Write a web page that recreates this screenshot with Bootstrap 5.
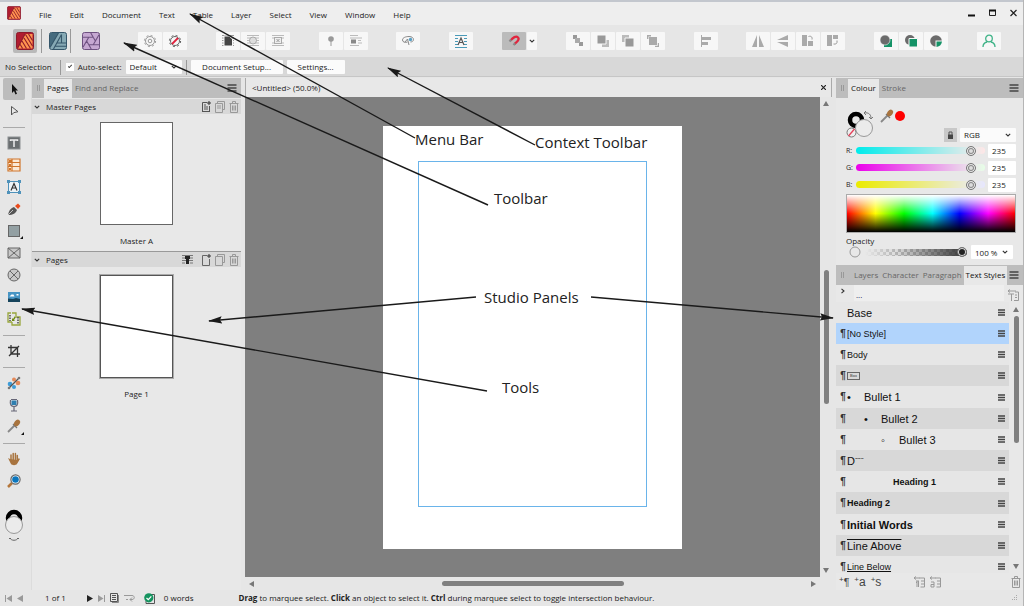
<!DOCTYPE html>
<html lang="en">
<head>
<meta charset="utf-8">
<meta name="viewport" content="width=device-width, initial-scale=1">
<title>Untitled (50.0%)</title>
<link href="https://cdn.jsdelivr.net/npm/bootstrap@5.3.0/dist/css/bootstrap.min.css" rel="stylesheet">
<style>
:root{--ui:#e8e8e8;--head:#bdbdbd;--ctx:#d8d8d8;--ink:#222}
body{font:8px/12px "Open Sans","Noto Sans",sans-serif;background:#e6e6e6;color:var(--ink);height:100vh;min-height:600px;border-right:1px solid #b5b5b5}
button,input,select{font:inherit;color:inherit;border:0;padding:0}
button{background:none;display:flex;align-items:center;justify-content:center;white-space:nowrap}
a{color:inherit;text-decoration:none}
svg{display:block;flex:none;fill:none;stroke:none}
.menus{height:25px;background:#eee;border-top:2px solid #c3c7ce;padding:0 6px 0 7px}
.menu-links{gap:18px;margin-left:18px;flex:1;padding-top:3px}
.win{gap:14px}
.tools-top{height:32px;padding:0 22px 0 13px}
.persona{width:24px;height:24px}
.persona.on{background:#b9b9b9;border-radius:2px}
.vsep{width:1px;height:15px;background:#999;flex:none}
.vsep.tall{height:24px}
.groups{margin-left:35px;flex:1}
.tb{width:24px;height:18px;background:#f7f7f7;border-radius:1px}
.tb.drop{width:10px}
.tb.on{background:#bbb}
.ctx{height:21px;background:var(--ctx);padding:2px 0 0 5px;border-bottom:1px solid #c6c6c6}
.white-box{background:#fbfbfb;height:14px;border-radius:1px}
.ctx input[type=checkbox]{appearance:none;width:8px;height:8px;background:#fff;margin:0 4px 0 5px;position:relative}
.ctx input:checked::after{content:"";position:absolute;left:2px;top:2px;width:4px;height:2px;border:solid #444;border-width:0 0 1px 1px;transform:rotate(-45deg)}
select{appearance:none;border-radius:1px}
.pick{position:relative}
.pick svg{position:absolute;right:5px;top:5px;pointer-events:none}
.pick select{width:56px;padding-left:4px;display:block}
.work{padding-top:1px;gap:4px;min-height:0}
.toolcol{width:32px;padding-right:3px;border-right:1px solid #dcdcdc;align-items:center}
.tl{width:22px;height:22px;flex:none}
.tl.on{background:#bcbcbc;border-radius:2px}
.rule{width:22px;height:1px;background:#aaa;margin:5px 0 4px;flex:none}
.pagescol{width:209px;margin-left:-4px;background:var(--ui)}
.tabrow{height:20px;background:var(--head);color:#666;flex:none}
.tabrow .grip{width:1px;height:6px;border:solid #999;border-width:0 1px;box-sizing:content-box;margin:0 4px 0 5px}
.tabrow button{height:19px;align-self:flex-end;padding:0 3px 2px}
.tabrow.tight button{padding:0 2px 2px}
.tabrow button.on{background:var(--ui);color:#111}
.sect{height:15px;background:var(--ctx);padding:0 2px;margin-top:1px}
.sect.second{border-top:1px solid #999;height:16px;margin-top:0}
.sect span{margin-left:6px;flex:1}
.sheetbox{padding:8px 0 4px}
.sheet{width:73px;height:103px;background:#fff;border:1px solid #666}
.sheet.sel{border-color:#555;box-shadow:0 0 0 1px #aaa}
.cap{margin-top:10px}
.doc{flex:1;min-width:0}
.doctab{height:19px;border:1px solid #aaa;border-width:0 1px;padding:0 5px 0 6px;flex:none;background:var(--ui)}
.canvas{background:#7f7f7f;flex:1;min-width:0}
.paper{width:299px;height:423px;background:#fff;padding:35px 35px 42px}
.margins{border:1px solid #6ab4ea}
.vbar{width:12px;padding:4px 0;flex:none}
.thumb{width:5px;height:134px;border-radius:3px;background:#808080}
.thumb.short{height:127px;margin-top:4px}
.thumb.flat{height:5px;width:182px}
.down{transform:rotate(180deg)}
.hbar{height:13px;padding:0 16px 0 4px;flex:none}
.studio{width:187px;background:var(--ui)}
.colourbox{padding:10px 7px 5px 10px;height:167px;flex:none}
.row-s{height:17px;gap:3px}
.row-s label{width:7px;font-size:7px}
.row-s input[type=number],.opac{width:28px;height:14px;background:#fff;padding-left:4px;border-radius:1px;appearance:textfield}
.opac{width:42px;display:block}
input::-webkit-inner-spin-button{display:none}
input[type=range]{appearance:none;height:7px;border-radius:4px;flex:1;min-width:0}
input[type=range]::-webkit-slider-thumb{appearance:none;width:10px;height:10px;border-radius:50%;border:1px solid #777;background:#ddd;box-shadow:inset 0 0 0 1px #eee,inset 0 0 0 2px #888}
.rg-r{background:linear-gradient(90deg,#00ebeb,#ebebeb 92%,#ffe6e6)}
.rg-g{background:linear-gradient(90deg,#eb00eb,#ebebeb 92%,#e6ffe6)}
.rg-b{background:linear-gradient(90deg,#ebeb00,#ebebeb 92%,#e6e6ff)}
.rg-o{background:linear-gradient(90deg,#e8e8e8,#aaaaaa66 30%,#333),repeating-conic-gradient(#bbb 0 25%,#fff 0 50%) 0 0/6px 6px}
input.rg-o::-webkit-slider-thumb{background:#222;box-shadow:inset 0 0 0 1px #ddd}
.spectrum{height:39px;border:1px solid #aaa;margin-top:1px;background:linear-gradient(#fff,#fff0 50%,#0000 50%,#000),linear-gradient(90deg,red,#ff0 17%,#0f0 34%,#0ff 51%,#00f 67%,#f0f 84%,red)}
.find{height:17px;flex:none}
.find input{background:#eee;height:16px;flex:1;min-width:0;margin-left:8px;padding:3px 0 0 2px;color:#225}
.styles{flex:1;min-height:0;overflow:hidden}
.st{height:21px;padding:0 4px 0 3px;font:9px/12px "Liberation Sans",Arial,sans-serif;color:#111;background:#e6e6e6}
.st:nth-child(5n){height:22px}
.st:nth-child(2n){background:#d8d8d8}
.st.on{background:#b1d4fc}
.pil{width:8px;font-weight:bold;color:#333;text-align:center;font-size:10px}
.nm{flex:1}
.big{font-size:11px}
.in1{padding-left:17px}.in2{padding-left:34px}.in3{padding-left:52px}
.in1,.in2,.in3{position:relative}
.in1::before,.in2::before,.in3::before{content:"•";position:absolute;left:0}
.in2::before{left:17px}
.in3::before{content:"◦";left:34px}
.boxed{border:1px solid #666;font-size:4px;line-height:6px;padding:0 2px;color:#333}
.over{text-decoration:overline}
.dash{font-size:5px;line-height:1;position:relative;top:-5px}
.sbar{width:14px;padding:5px 0 4px}
.foot{height:17px;padding:0 2px 0 3px;font:12px/14px "Liberation Sans",sans-serif;color:#444;flex:none;gap:5px}
.foot sup{font-size:8px;top:-4px}
.status{height:16px;padding:0 5px;flex:none;gap:5px}
.status .pageno{margin:0 16px 0 17px}
.hint{margin-left:40px}
.notes{position:absolute;inset:0;pointer-events:none;overflow:hidden}
.notes span{position:absolute;font-size:15px;line-height:20px;color:#222;white-space:nowrap}
</style>
</head>
<body class="d-flex flex-column overflow-hidden position-relative">
<svg width="0" height="0" class="position-absolute" aria-hidden="true"><defs>
<symbol id="burger" viewBox="0 0 10 8"><path d="M0.500 1h9M0.500 4h9M0.500 7h9" stroke="#444" stroke-width="1.400"/></symbol>
<symbol id="lines" viewBox="0 0 7 7"><path d="M0 1h7M0 3.500h7M0 6h7" stroke="#444" stroke-width="1.300"/></symbol>
<symbol id="chev" viewBox="0 0 6 4"><path d="M.8.8 3 3 5.200.8" stroke="#333" stroke-width="1.100"/></symbol>
<symbol id="tri" viewBox="0 0 6 5"><path d="M3 0l3 5H0z" fill="#777"/></symbol>
<symbol id="trash" viewBox="0 0 10 12"><path d="M.5 2.500h9M3.500 2V.5h3V2M1.500 3v8.500h7V3M3.500 4.500v5M5 4.500v5M6.500 4.500v5" stroke="#999"/></symbol>
<symbol id="picker" viewBox="0 0 14 14"><path d="M1 13 8 6" stroke="#888" stroke-width="1.800"/><path d="M6 5l4 4" stroke="#777" stroke-width="1.200"/><ellipse cx="10" cy="4" rx="2.600" ry="3.600" transform="rotate(40 10 4)" fill="#a8743f"/></symbol>
<symbol id="pub" viewBox="0 0 18 18"><rect x=".5" y=".5" width="17" height="17" rx="2" fill="#b01c30" stroke="#8c1a2a"/><path d="M1.500 16.500 9 2h7.500v14.500z" fill="#ff934f"/><path d="M9 2 1.500 16.500M12.500 2l4 6.500M9.500 2.500l7 11.500M8 6l6.500 10.500M6 9l4.500 7.500M4.200 12.500l2.400 4" stroke="#8c1a2a" stroke-width="1.100"/></symbol>
</defs></svg>

<header class="menus d-flex align-items-center">
  <svg width="14" height="14"><use href="#pub"/></svg>
  <nav class="menu-links d-flex"><a href="#">File</a><a href="#">Edit</a><a href="#">Document</a><a href="#">Text</a><a href="#">Table</a><a href="#">Layer</a><a href="#">Select</a><a href="#">View</a><a href="#">Window</a><a href="#">Help</a></nav>
  <div class="win d-flex">
    <button aria-label="Minimise"><svg width="7" height="8"><path d="M0 6.500h7" stroke="#111" stroke-width="2"/></svg></button>
    <button aria-label="Maximise"><svg width="7" height="8"><path d="M.5 1v5.500h6V1" stroke="#222"/><path d="M0 1.500h7" stroke="#111" stroke-width="2"/></svg></button>
    <button aria-label="Close"><svg width="7" height="8"><path d="M.5 1l6 6M6.500 1l-6 6" stroke="#222" stroke-width="1.200"/></svg></button>
  </div>
</header>

<div class="tools-top d-flex align-items-center">
  <button class="persona on" aria-label="Publisher"><svg width="18" height="18"><use href="#pub"/></svg></button>
  <i class="vsep tall mx-1"></i>
  <button class="persona" aria-label="Designer"><svg width="18" height="18"><rect x=".5" y=".5" width="17" height="17" rx="2" fill="#86a9b4" stroke="#35566a"/><path d="M1 1h8.500L1 15.500z" fill="#456b7e"/><path d="M9.500 1 1 15.500M12.500 2.500 4.500 17M12.500 2.500V11M7.800 11H17M6 14.200h11" stroke="#35566a" stroke-width="1.100"/></svg></button>
  <i class="vsep tall"></i>
  <button class="persona ms-2" aria-label="Photo"><svg width="18" height="18"><rect x=".5" y=".5" width="17" height="17" rx="2" fill="#c6a8d2" stroke="#6e5180"/><path d="M6.800 5.200h4.400L13.400 9l-2.200 3.800H6.800L4.600 9zM11.200 5.200 8.800 1M13.400 9 17 2.800M11.200 12.800H17M6.800 12.800 9.200 17M4.600 9 1 15.200M6.800 5.200H1" stroke="#6e5180" stroke-width="1.100"/></svg></button>
  <div class="groups d-flex justify-content-between">
    <div class="d-flex" style="gap:1px">
      <button class="tb" aria-label="Preferences"><svg width="14" height="14"><circle cx="7" cy="7" r="4.500" stroke="#999"/><circle cx="7" cy="7" r="5.600" stroke="#999" stroke-dasharray="2 2.400"/><circle cx="7" cy="7" r="1.800" stroke="#999"/></svg></button>
      <button class="tb" aria-label="Preflight"><svg width="14" height="14"><circle cx="7" cy="7" r="4.500" stroke="#666"/><circle cx="7" cy="7" r="5.600" stroke="#555" stroke-dasharray="2 2.400"/><path d="M4 10l6-6" stroke="#e0203c" stroke-width="1.800"/></svg></button>
    </div>
    <div class="d-flex" style="gap:1px">
      <button class="tb" aria-label="Wrap settings"><svg width="14" height="12"><path d="M1 .5h12M1 3h12M1 5.500h12M1 8h12M1 10.500h12" stroke="#999"/><path d="M3 1h5l3.500 3v7H3z" fill="#444" stroke="#f7f7f7"/></svg></button>
      <button class="tb" aria-label="Wrap none"><svg width="14" height="12"><path d="M1 .5h12M1 3h12M1 5.500h12M1 8h12M1 10.500h12" stroke="#bbb"/><circle cx="7" cy="5.500" r="3.500" fill="#ddd" stroke="#aaa"/></svg></button>
      <button class="tb" aria-label="Wrap edges"><svg width="14" height="12"><path d="M1 .5h12M1 3h12M1 8h12M1 10.500h12" stroke="#bbb"/><rect x="3.500" y="2.500" width="7" height="6" fill="#eee" stroke="#aaa"/><path d="M5.500 4l3 3M8.500 4l-3 3" stroke="#999"/></svg></button>
    </div>
    <div class="d-flex" style="gap:1px">
      <button class="tb" aria-label="Pin"><svg width="14" height="12"><circle cx="7" cy="4" r="2.800" fill="#999"/><path d="M7 5v6" stroke="#999"/></svg></button>
      <button class="tb" aria-label="Inline"><svg width="14" height="12"><path d="M1 .5h8M1 3h12M9 5.500h3M9 8h4M1 10.500h9" stroke="#bbb"/><path d="M2 4.500h5v4H2z" fill="#888"/></svg></button>
    </div>
    <button class="tb" aria-label="Preview"><svg width="14" height="12"><path d="M6.500 7C4 8 1.500 7 1.500 5 1.500 2.500 5 1.500 8 1.500s4.500 1.500 4.500 3-1.500 2.500-3 2.500M4 7l2.500-3L8 10" stroke="#888"/><circle cx="9.500" cy="4.500" r="1.700" fill="#5a9fc4"/></svg></button>
    <button class="tb" aria-label="Baseline grid"><svg width="14" height="14"><path d="M1 1.500h12M1 4.500h3M10 4.500h3M1 7.500h3M10 7.500h3M1 10.500h3M10 10.500h3M1 13.500h12" stroke="#4a9ab8"/><path d="M4 11 7 4l3 7M5 8.500h4" stroke="#555" stroke-width="1.200"/></svg></button>
    <div class="d-flex" style="gap:1px">
      <button class="tb on" aria-label="Snapping"><svg width="14" height="12"><path d="M3.500 5.500C6 2.500 9 .5 11 2.500S9.500 7.500 7.500 9" stroke="#e1253e" stroke-width="2.300"/><path d="M4.200 4.800 2.500 6.500M8.300 8.300l-1.800 1.700" stroke="#888" stroke-width="2.300"/></svg></button>
      <button class="tb drop" aria-label="Snapping options"><svg width="6" height="4"><use href="#chev"/></svg></button>
    </div>
    <div class="d-flex" style="gap:1px">
      <button class="tb" aria-label="Move to back"><svg width="12" height="12"><path d="M1 0h4v4H1zM7 7h4v4H7z" fill="#999"/><path d="M3 3h5v5H3z" fill="#aaa"/></svg></button>
      <button class="tb" aria-label="Move back"><svg width="12" height="12"><path d="M5 5h7v7H5z" fill="#bbb"/><path d="M0 0h9v9H0z" fill="#999" stroke="#f7f7f7"/></svg></button>
      <button class="tb" aria-label="Move forward"><svg width="12" height="12"><path d="M0 0h7v7H0z" fill="#bbb"/><path d="M3 3h9v9H3z" fill="#999" stroke="#f7f7f7"/></svg></button>
      <button class="tb" aria-label="Move to front"><svg width="12" height="12"><path d="M2 2h8v8H2z" fill="#aaa"/><path d="M.7 4V.7H4M11.500 8v3.500H8" stroke="#aaa" stroke-width="1.400"/></svg></button>
    </div>
    <button class="tb" aria-label="Alignment"><svg width="12" height="12"><path d="M1.500 0v12" stroke="#aaa"/><path d="M2 3.500h9M2 8.500h6" stroke="#aaa" stroke-width="3"/></svg></button>
    <div class="d-flex" style="gap:1px">
      <button class="tb" aria-label="Flip horizontal"><svg width="12" height="12"><path d="M5 0v12H0zM7 0v12h5z" fill="#aaa"/></svg></button>
      <button class="tb" aria-label="Flip vertical"><svg width="12" height="12"><path d="M11 0v5H0zM11 7v5L0 7z" fill="#aaa"/></svg></button>
      <button class="tb" aria-label="Rotate left"><svg width="12" height="12"><path d="M0 0h5v11H0zM6 6h5v5H6z" fill="#aaa"/><path d="M6.500 1.500c3-1 4 1 3.500 3" stroke="#999"/></svg></button>
      <button class="tb" aria-label="Rotate right"><svg width="12" height="12"><path d="M0 0h5v11H0zM6 0h5v4H6z" fill="#aaa"/><path d="M10 5.500c.5 3-1 4-3.500 3.500" stroke="#999"/></svg></button>
    </div>
    <div class="d-flex" style="gap:1px">
      <button class="tb" aria-label="Insert behind"><svg width="12" height="12"><path d="M4 4h8v8H4z" fill="#159367"/><circle cx="5" cy="5" r="5" fill="#6b6b6b" stroke="#f7f7f7" stroke-width=".6"/></svg></button>
      <button class="tb" aria-label="Insert on top"><svg width="13" height="12"><circle cx="5" cy="5" r="5" fill="#6b6b6b"/><path d="M4 3.500h8.500V12H4z" fill="#159367" stroke="#f7f7f7"/></svg></button>
      <button class="tb" aria-label="Insert inside"><svg width="12" height="12"><circle cx="6" cy="6" r="5.800" fill="#6b6b6b"/><path d="M5.500 5.500h7v7h-7z" fill="#f7f7f7"/><path d="M6.500 6.500H12c-.5 3-2 5-5.500 5.500z" fill="#159367"/></svg></button>
    </div>
    <button class="tb" aria-label="Account"><svg width="14" height="14"><circle cx="7" cy="4.500" r="3.300" stroke="#3fb387" stroke-width="1.300"/><path d="M1 13c0-3 2-4.500 4-5M13 13c0-3-2-4.500-4-5" stroke="#3fb387" stroke-width="1.300"/></svg></button>
  </div>
</div>

<div class="ctx d-flex align-items-center">
  <span>No Selection</span><i class="vsep ms-2"></i>
  <input type="checkbox" id="auto" checked><label for="auto">Auto-select:</label>
  <div class="pick ms-1"><select class="white-box" aria-label="Auto-select mode"><option>Default</option></select><svg width="6" height="4"><use href="#chev"/></svg></div>
  <i class="vsep ms-1"></i>
  <button class="white-box ms-1 px-2" style="min-width:92px">Document Setup...</button>
  <button class="white-box ms-1 px-2" style="min-width:58px">Settings...</button>
</div>

<main class="work d-flex flex-fill">
  <aside class="toolcol d-flex flex-column flex-shrink-0">
    <button class="tl on" aria-label="Move"><svg width="14" height="14"><path d="M5 2v9l2-2 1.500 3.500 1.500-.8L8.500 8.500H11z" fill="#111"/></svg></button>
    <button class="tl" aria-label="Node"><svg width="14" height="14"><path d="M4.500 2.500v8.500l2.200-2.300 4.300-1z" stroke="#555"/></svg></button>
    <i class="rule"></i>
    <button class="tl" aria-label="Frame text"><svg width="14" height="14"><rect x="1" y="1" width="12" height="12" fill="#6a6e70" stroke="#8c9092"/><path d="M3.500 5V4h7v1M7 4v7" stroke="#eee" stroke-width="1.500"/></svg></button>
    <button class="tl" aria-label="Table"><svg width="14" height="14"><rect x="1" y="1" width="12" height="12" fill="#fbe9d5"/><path d="M1 1h12v12H1zM1 4.500h12M1 8.500h12M5 1v12" stroke="#d0752b" stroke-width="1.200"/><path d="M2 2h3v2H2zM2 6h2v2H2zM2 10h2v2H2z" fill="#d0752b"/></svg></button>
    <button class="tl" aria-label="Artistic text"><svg width="14" height="14"><rect x="1.500" y="1.500" width="11" height="11" fill="#edf3f7" stroke="#4f92ba"/><path d="M0 0h3v3H0zM11 0h3v3h-3zM0 11h3v3H0zM11 11h3v3h-3z" fill="#4f92ba"/><path d="M4 10.500 7 3.500l3 7M5 8h4" stroke="#333" stroke-width="1.200"/></svg></button>
    <button class="tl" aria-label="Pen"><svg width="14" height="14"><path d="M1 13c1-5 3-7 6-8l3 3c-1 3-4 5-9 5z" fill="#555"/><path d="M1 13l5-5" stroke="#ddd" stroke-width=".8"/><path d="M8 4l3 3 2.500-3L11 1.500z" fill="#ea4b1c"/></svg></button>
    <button class="tl" aria-label="Rectangle"><svg width="22" height="22"><rect x="5.500" y="5.500" width="11" height="11" fill="#93a0a3" stroke="#666"/><path d="M20 16v3h-3z" fill="#111"/></svg></button>
    <button class="tl" aria-label="Picture frame"><svg width="14" height="14"><path d="M1 2h12v10H1zM1 2l12 10M13 2 1 12" fill="#c8c8c8" stroke="#666"/></svg></button>
    <button class="tl" aria-label="Ellipse frame"><svg width="14" height="14"><circle cx="7" cy="7" r="6" fill="#c8c8c8" stroke="#666"/><path d="M3 3l8 8M11 3l-8 8" stroke="#666"/></svg></button>
    <button class="tl" aria-label="Place image"><svg width="14" height="14"><rect x="1" y="2" width="12" height="10" fill="#4895c4"/><path d="M1 8.500l5 .5 3-1 4 1v3H1z" fill="#17445c"/><path d="M2.500 6.500h5l-1-2h-2zM9.500 5.500h2V4h-2z" fill="#fff"/></svg></button>
    <button class="tl" aria-label="Data merge"><svg width="14" height="14"><path d="M4 1H1v9h4M5 1h4v3M9 13h4V5H9M5 10v3h4" stroke="#98a63c" stroke-width="1.300"/><path d="M3 3v6M11 5v7" stroke="#555" stroke-width="1.600" stroke-dasharray="1.500 1"/><path d="M5 9V6l1 1 2-3 1 1-2 3 1 1z" fill="#6f8a10"/></svg></button>
    <i class="rule"></i>
    <button class="tl" aria-label="Crop"><svg width="14" height="14"><path d="M4 1v9h9M1 3.500h9.500V13M2 12 12 2" stroke="#333" stroke-width="1.300"/></svg></button>
    <i class="rule"></i>
    <button class="tl" aria-label="Fill"><svg width="14" height="14"><circle cx="7" cy="3.500" r="2" fill="#e48a5a"/><circle cx="11" cy="7" r="2.300" fill="#e48a5a"/><circle cx="3" cy="8" r="2.300" fill="#3d9cd8"/><circle cx="7" cy="11" r="2" fill="#3d9cd8"/><path d="M2 12 12 2" stroke="#555" stroke-width="1.300"/><circle cx="2" cy="12" r="1.300" fill="#777"/><circle cx="12" cy="2" r="1.300" fill="#777"/></svg></button>
    <button class="tl" aria-label="Transparency"><svg width="14" height="14"><path d="M4 1.500h6M3.500 2c-1 5 1 6.500 3.500 6.500s4.500-1.500 3.500-6.500M7 8.500v4M4 13h6" stroke="#667" stroke-width="1.200"/><path d="M4.500 2.500h5v4.500h-5z" fill="#2f7fb0"/></svg></button>
    <button class="tl" aria-label="Colour picker"><svg width="22" height="22"><use href="#picker" x="4" y="3" width="14" height="14"/><path d="M21 16v3h-3z" fill="#111"/></svg></button>
    <i class="rule"></i>
    <button class="tl" aria-label="Hand"><svg width="14" height="14"><path d="M3 7l-2-1 3 6c1 1.500 5 1.500 6 0l2.500-5L10 8z" fill="#a8743f"/><path d="M4 9V3M6.200 8V1.500M8.400 8V1.500M10.300 9V3.500M12 7l-2 3" stroke="#a8743f" stroke-width="1.500" stroke-linecap="round"/></svg></button>
    <button class="tl" aria-label="Zoom"><svg width="14" height="14"><path d="M1 13l4-4" stroke="#b5763a" stroke-width="2.500"/><circle cx="8.500" cy="5.500" r="4.600" fill="#fff" stroke="#666" stroke-width="1.200"/><circle cx="8.500" cy="5.500" r="3.300" fill="#0b76bd"/></svg></button>
    <svg class="mt-3" width="20" height="36"><circle cx="10" cy="10" r="6" stroke="#000" stroke-width="4.500"/><circle cx="10" cy="17" r="8.500" fill="#ebebeb" stroke="#999"/><path d="M6 30c1 3 7 3 8 0M5 30.500h2M13 30.500h2" stroke="#666"/></svg>
  </aside>

  <section class="pagescol flex-shrink-0">
    <div class="tabrow d-flex align-items-center pe-1"><i class="grip"></i><button class="on">Pages</button><button>Find and Replace</button><button class="ms-auto px-0" aria-label="Panel menu"><svg width="10" height="8"><use href="#burger"/></svg></button></div>
    <div class="sect d-flex align-items-center"><svg width="6" height="4"><use href="#chev"/></svg><span>Master Pages</span>
      <div class="d-flex gap-1">
      <svg width="10" height="12"><path d="M6 1.500H1.500v9h7V5M3 4h2M3 6h4M3 8h4M1 10.500h8" stroke="#555"/><path d="M8 0v4M6 2h4" stroke="#333"/></svg>
      <svg width="10" height="12"><path d="M2.500 2V.5h7v8H8M.5 2.500h7v9h-7zM2 5h4M2 7h4" stroke="#999"/></svg>
      <svg width="10" height="12"><use href="#trash"/></svg></div></div>
    <div class="sheetbox d-flex flex-column align-items-center"><div class="sheet"></div><div class="cap">Master A</div></div>
    <div class="sect second d-flex align-items-center"><svg width="6" height="4"><use href="#chev"/></svg><span>Pages</span>
      <div class="d-flex gap-1">
      <svg class="me-1" width="11" height="12"><path d="M0 1.500h11M0 4h11M0 6.500h11M0 9h3M8 9h3" stroke="#777"/><path d="M3 2h5v3H7v5H4V5H3z" fill="#222"/></svg>
      <svg width="10" height="12"><path d="M6 1.500H1.500v10h7V5" stroke="#666"/><path d="M8 0v4M6 2h4" stroke="#333"/></svg>
      <svg width="10" height="12"><path d="M2.500 2V.5h7v8H8M.5 2.500h7v9h-7z" stroke="#999"/></svg>
      <svg width="10" height="12"><use href="#trash"/></svg></div></div>
    <div class="sheetbox d-flex flex-column align-items-center"><div class="sheet sel"></div><div class="cap">Page 1</div></div>
  </section>

  <section class="doc d-flex flex-column">
    <div class="doctab d-flex align-items-center justify-content-between"><span>&lt;Untitled&gt; (50.0%)</span><button aria-label="Close document"><svg width="5" height="5"><path d="M0 0l5 5M5 0 0 5" stroke="#222" stroke-width="1.200"/></svg></button></div>
    <div class="d-flex flex-fill">
      <div class="canvas d-flex align-items-center justify-content-center"><div class="paper d-flex"><div class="margins flex-fill"></div></div></div>
      <div class="vbar d-flex flex-column align-items-center justify-content-between"><svg width="6" height="5"><use href="#tri"/></svg><i class="thumb"></i><svg class="down" width="6" height="5"><use href="#tri"/></svg></div>
    </div>
    <div class="hbar d-flex align-items-center justify-content-between"><svg width="5" height="6"><path d="M5 0v6L0 3z" fill="#777"/></svg><i class="thumb flat"></i><svg width="5" height="6"><path d="M0 0v6l5-3z" fill="#777"/></svg></div>
  </section>

  <aside class="studio d-flex flex-column flex-shrink-0">
    <div class="tabrow d-flex align-items-center pe-1"><i class="grip"></i><button class="on">Colour</button><button>Stroke</button><button class="ms-auto px-0" aria-label="Panel menu"><svg width="10" height="8"><use href="#burger"/></svg></button></div>
    <div class="colourbox">
      <div class="d-flex justify-content-between" style="height:34px">
        <svg width="60" height="32"><circle cx="10" cy="12" r="6" stroke="#000" stroke-width="4.500"/><circle cx="18" cy="20" r="8.500" fill="#ebebeb" stroke="#999"/><circle cx="5.500" cy="24.500" r="4.500" fill="#eee" stroke="#777"/><path d="M2.500 28l6-7" stroke="#e5405a" stroke-width="1.300"/><path d="M18 5c5-1 7 2 7 5M20 3l-2 2 2 2M23 9l2 2 2-2" stroke="#777"/><use href="#picker" x="34" y="1" width="14" height="14"/><circle cx="54" cy="8" r="5" fill="#f00"/></svg>
        <div class="d-flex align-items-end" style="gap:3px"><button aria-label="Lock" style="width:13px;height:14px;background:#c8c8c8"><svg width="7" height="8"><path d="M1 3.500h5V8H1z" fill="#444"/><path d="M2 4V1h3v3" stroke="#555"/></svg></button>
        <div class="pick"><select class="white-box" aria-label="Colour model"><option>RGB</option></select><svg width="6" height="4"><use href="#chev"/></svg></div></div>
      </div>
      <div class="row-s d-flex align-items-center"><label for="r">R:</label><input id="r" class="rg-r" type="range" max="255" value="235"><input type="number" value="235" aria-label="Red"></div>
      <div class="row-s d-flex align-items-center"><label for="g">G:</label><input id="g" class="rg-g" type="range" max="255" value="235"><input type="number" value="235" aria-label="Green"></div>
      <div class="row-s d-flex align-items-center"><label for="b">B:</label><input id="b" class="rg-b" type="range" max="255" value="235"><input type="number" value="235" aria-label="Blue"></div>
      <div class="spectrum"></div>
      <label for="op" class="d-block mt-1" style="line-height:8px">Opacity</label>
      <div class="d-flex align-items-center" style="gap:4px;padding:0 3px"><svg width="12" height="12"><circle cx="6" cy="6" r="5" stroke="#999"/></svg><input id="op" class="rg-o" type="range" value="100"><div class="pick"><input class="opac" value="100 %" aria-label="Opacity value"><svg width="6" height="4"><use href="#chev"/></svg></div></div>
    </div>
    <div class="tabrow tight d-flex align-items-center pe-1"><i class="grip"></i><button class="ms-1">Layers</button><button>Character</button><button>Paragraph</button><button class="on">Text Styles</button><button class="ms-auto px-0" aria-label="Panel menu"><svg width="10" height="8"><use href="#burger"/></svg></button></div>
    <div class="find d-flex ps-1"><svg width="6" height="8" style="margin-top:3px"><path d="M1.500.8 4 3 1.500 5.200" stroke="#333" stroke-width="1.100"/></svg><input aria-label="Current style" value="..."><svg class="mx-1 mt-1" width="11" height="12"><path d="M0 2h8M2 .5 0 2l2 1.500M0 5h6M3.500 5v7M7 3h3.500v8.500H6M7 6h2M7 8.500h2" stroke="#999"/></svg></div>
    <div class="d-flex flex-fill" style="min-height:0">
      <div class="styles">
        <div class="st d-flex align-items-center"><span class="pil"></span><span class="nm big">Base</span><svg width="7" height="7"><use href="#lines"/></svg></div>
        <div class="st on d-flex align-items-center"><span class="pil">¶</span><span class="nm">[No Style]</span><svg width="7" height="7"><use href="#lines"/></svg></div>
        <div class="st d-flex align-items-center"><span class="pil">¶</span><span class="nm">Body</span><svg width="7" height="7"><use href="#lines"/></svg></div>
        <div class="st d-flex align-items-center"><span class="pil">¶</span><span class="nm d-flex"><span class="boxed">Box</span></span><svg width="7" height="7"><use href="#lines"/></svg></div>
        <div class="st d-flex align-items-center"><span class="pil">¶</span><span class="nm big in1">Bullet 1</span><svg width="7" height="7"><use href="#lines"/></svg></div>
        <div class="st d-flex align-items-center"><span class="pil">¶</span><span class="nm big in2">Bullet 2</span><svg width="7" height="7"><use href="#lines"/></svg></div>
        <div class="st d-flex align-items-center"><span class="pil">¶</span><span class="nm big in3">Bullet 3</span><svg width="7" height="7"><use href="#lines"/></svg></div>
        <div class="st d-flex align-items-center"><span class="pil">¶</span><span class="nm big">D<span class="dash">~~~</span></span><svg width="7" height="7"><use href="#lines"/></svg></div>
        <div class="st d-flex align-items-center"><span class="pil">¶</span><span class="nm fw-bold text-center pe-3">Heading 1</span><svg width="7" height="7"><use href="#lines"/></svg></div>
        <div class="st d-flex align-items-center"><span class="pil">¶</span><span class="nm fw-bold">Heading 2</span><svg width="7" height="7"><use href="#lines"/></svg></div>
        <div class="st d-flex align-items-center"><span class="pil">¶</span><span class="nm big fw-bold">Initial Words</span><svg width="7" height="7"><use href="#lines"/></svg></div>
        <div class="st d-flex align-items-center"><span class="pil">¶</span><span class="nm big"><span class="over">Line Above</span></span><svg width="7" height="7"><use href="#lines"/></svg></div>
        <div class="st d-flex align-items-center"><span class="pil">¶</span><span class="nm text-decoration-underline">Line Below</span><svg width="7" height="7"><use href="#lines"/></svg></div>
      </div>
      <div class="sbar d-flex flex-column align-items-center"><svg width="6" height="5"><use href="#tri"/></svg><i class="thumb short"></i><svg class="mt-auto down" width="6" height="5"><use href="#tri"/></svg></div>
    </div>
    <div class="foot d-flex align-items-center"><span><sup>+</sup><small>¶</small></span><span><sup>+</sup>a</span><span><sup>+</sup>s</span>
      <svg class="ms-auto" width="11" height="12"><path d="M0 2h6M2 .5 0 2l2 1.500M5.500 2h5v9h-4M7 5h3M7 8h3M4.500 5v6M3 5v6M2 5h3M2 6.500h1" stroke="#999"/></svg>
      <svg width="11" height="12"><path d="M0 2h6M2 .5 0 2l2 1.500M5.500 2h5v9h-4M7 5h3M7 8h3M1 6h3v5H1V8.500h3" stroke="#999"/></svg>
      <svg style="margin-left:65px" width="10" height="12"><use href="#trash"/></svg></div>
  </aside>
</main>

<footer class="status d-flex align-items-center">
  <svg width="7" height="7"><path d="M.5 0v7" stroke="#999"/><path d="M7 0v7L1.500 3.500z" fill="#999"/></svg>
  <svg width="6" height="7"><path d="M6 0v7L0 3.500z" fill="#999"/></svg>
  <span class="pageno">1 of 1</span>
  <svg width="6" height="7"><path d="M0 0v7l6-3.500z" fill="#222"/></svg>
  <svg width="7" height="7"><path d="M6.500 0v7" stroke="#999"/><path d="M0 0v7l5.500-3.500z" fill="#999"/></svg>
  <svg width="9" height="10"><path d="M.5.5h7v8h-7zM2 2.500h4M2 4.500h4M2 6.500h4" stroke="#555"/><path d="M8.500 2v7.500H2" stroke="#888"/></svg>
  <svg width="11" height="10"><path d="M0 2.500h8c3 0 3 4 0 4H6M8 4.500l-2 2 2 2M4 6.500H2" stroke="#999"/></svg>
  <svg class="ms-1" width="11" height="11"><path d="M5 1.500h5.500v9H2V8" stroke="#555"/><circle cx="4.800" cy="4.800" r="4.600" fill="#14935f"/><path d="M2.500 5l1.800 1.700L7.300 3.300" stroke="#fff" stroke-width="1.200"/></svg>
  <span class="ms-1">0 words</span>
  <span class="hint"><b>Drag</b> to marquee select. <b>Click</b> an object to select it. <b>Ctrl</b> during marquee select to toggle intersection behaviour.</span>
  <svg class="ms-auto" width="6" height="6"><path d="M4 0h1v1H4zM2 2h1v1H2zM4 2h1v1H4zM0 4h1v1H0zM2 4h1v1H2zM4 4h1v1H4z" fill="#aaa"/></svg>
</footer>

<!-- Callouts drawn over the workspace -->
<div class="notes">
  <svg width="1024" height="606"><defs><marker id="tip" markerUnits="userSpaceOnUse" markerWidth="14" markerHeight="8" refX="13" refY="4" orient="auto"><path d="M14 4 0 .3 2 4 0 7.700z" fill="#1a1a1a"/></marker></defs>
  <g stroke="#1a1a1a" stroke-width="1.400"><path d="M415 138 190 14" marker-end="url(#tip)"/><path d="M488 205 124 43" marker-end="url(#tip)"/><path d="M535 145 388 68" marker-end="url(#tip)"/><path d="M476 297 209 321" marker-end="url(#tip)"/><path d="M591 297 833 318" marker-end="url(#tip)"/><path d="M487 391 22 309" marker-end="url(#tip)"/></g></svg>
  <span style="left:415px;top:129px">Menu Bar</span>
  <span style="left:535px;top:132px">Context Toolbar</span>
  <span style="left:494px;top:188px">Toolbar</span>
  <span style="left:484px;top:287px">Studio Panels</span>
  <span style="left:502px;top:377px">Tools</span>
</div>
<script src="https://cdn.jsdelivr.net/npm/bootstrap@5.3.0/dist/js/bootstrap.bundle.min.js"></script>
</body>
</html>
